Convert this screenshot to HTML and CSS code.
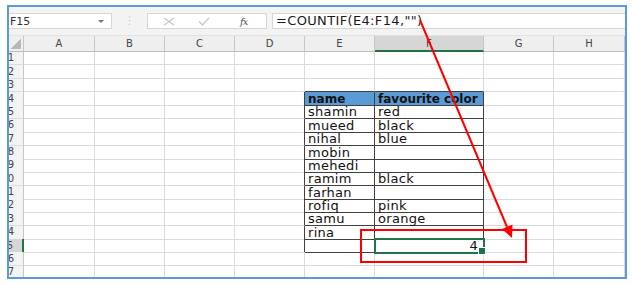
FILE: index.html
```html
<!DOCTYPE html>
<html lang="en">
<head>
    <meta charset="UTF-8">
    <title>COUNTIF blank cells</title>
    <link rel="stylesheet" href="styles.css">
</head>
<body>
    <div class="frame">
        <!-- formula bar -->
        <div class="toolbar">
            <div class="namebox"><span>F15</span><span class="drop"></span></div>
            <div class="grip">&#8942;</div>
            <div class="btns">
                <svg class="ico x" width="12" height="9" viewBox="0 0 12 9"><path d="M1 1L11 8M11 1L1 8" stroke="#c4c4c4" stroke-width="1.2" fill="none"/></svg>
                <svg class="ico ok" width="12" height="9" viewBox="0 0 12 9"><path d="M1 4.5L4.5 8L11 1" stroke="#c4c4c4" stroke-width="1.2" fill="none"/></svg>
                <span class="fx">fx</span>
            </div>
            <div class="formula">=COUNTIF(E4:F14,"")</div>
        </div>

        <!-- grid -->
        <div class="sheet">
            <div class="row head">
                <div class="corner"><span></span></div>
                <div class="ch">A</div><div class="ch">B</div><div class="ch">C</div><div class="ch">D</div>
                <div class="ch">E</div><div class="ch sel">F</div><div class="ch">G</div><div class="ch">H</div>
            </div>
            <div class="row">
                <div class="rh">1</div>
                <div class="c"></div><div class="c"></div><div class="c"></div><div class="c"></div>
                <div class="c"></div><div class="c"></div><div class="c"></div><div class="c"></div>
            </div>
            <div class="row">
                <div class="rh">2</div>
                <div class="c"></div><div class="c"></div><div class="c"></div><div class="c"></div>
                <div class="c"></div><div class="c"></div><div class="c"></div><div class="c"></div>
            </div>
            <div class="row">
                <div class="rh">3</div>
                <div class="c"></div><div class="c"></div><div class="c"></div><div class="c"></div>
                <div class="c tt"></div><div class="c tt"></div><div class="c"></div><div class="c"></div>
            </div>
            <div class="row">
                <div class="rh">4</div>
                <div class="c"></div><div class="c"></div><div class="c"></div><div class="c tl"></div>
                <div class="c t hd">name</div><div class="c t hd">favourite color</div><div class="c"></div><div class="c"></div>
            </div>
            <div class="row">
                <div class="rh">5</div>
                <div class="c"></div><div class="c"></div><div class="c"></div><div class="c tl"></div>
                <div class="c t">shamin</div><div class="c t">red</div><div class="c"></div><div class="c"></div>
            </div>
            <div class="row">
                <div class="rh">6</div>
                <div class="c"></div><div class="c"></div><div class="c"></div><div class="c tl"></div>
                <div class="c t">mueed</div><div class="c t">black</div><div class="c"></div><div class="c"></div>
            </div>
            <div class="row">
                <div class="rh">7</div>
                <div class="c"></div><div class="c"></div><div class="c"></div><div class="c tl"></div>
                <div class="c t">nihal</div><div class="c t">blue</div><div class="c"></div><div class="c"></div>
            </div>
            <div class="row">
                <div class="rh">8</div>
                <div class="c"></div><div class="c"></div><div class="c"></div><div class="c tl"></div>
                <div class="c t">mobin</div><div class="c t"></div><div class="c"></div><div class="c"></div>
            </div>
            <div class="row">
                <div class="rh">9</div>
                <div class="c"></div><div class="c"></div><div class="c"></div><div class="c tl"></div>
                <div class="c t">mehedi</div><div class="c t"></div><div class="c"></div><div class="c"></div>
            </div>
            <div class="row">
                <div class="rh">10</div>
                <div class="c"></div><div class="c"></div><div class="c"></div><div class="c tl"></div>
                <div class="c t">ramim</div><div class="c t">black</div><div class="c"></div><div class="c"></div>
            </div>
            <div class="row">
                <div class="rh">11</div>
                <div class="c"></div><div class="c"></div><div class="c"></div><div class="c tl"></div>
                <div class="c t">farhan</div><div class="c t"></div><div class="c"></div><div class="c"></div>
            </div>
            <div class="row">
                <div class="rh">12</div>
                <div class="c"></div><div class="c"></div><div class="c"></div><div class="c tl"></div>
                <div class="c t">rofiq</div><div class="c t">pink</div><div class="c"></div><div class="c"></div>
            </div>
            <div class="row">
                <div class="rh">13</div>
                <div class="c"></div><div class="c"></div><div class="c"></div><div class="c tl"></div>
                <div class="c t">samu</div><div class="c t">orange</div><div class="c"></div><div class="c"></div>
            </div>
            <div class="row">
                <div class="rh">14</div>
                <div class="c"></div><div class="c"></div><div class="c"></div><div class="c tl"></div>
                <div class="c t">rina</div><div class="c t"></div><div class="c"></div><div class="c"></div>
            </div>
            <div class="row">
                <div class="rh sel">15</div>
                <div class="c"></div><div class="c"></div><div class="c"></div><div class="c tl"></div>
                <div class="c t"></div><div class="c t num active">4</div><div class="c"></div><div class="c"></div>
            </div>
            <div class="row">
                <div class="rh">16</div>
                <div class="c"></div><div class="c"></div><div class="c"></div><div class="c"></div>
                <div class="c"></div><div class="c"></div><div class="c"></div><div class="c"></div>
            </div>
            <div class="row">
                <div class="rh">17</div>
                <div class="c"></div><div class="c"></div><div class="c"></div><div class="c"></div>
                <div class="c"></div><div class="c"></div><div class="c"></div><div class="c"></div>
            </div>
        </div>
    </div>

    <!-- red callout drawn over the sheet -->
    <svg class="marks" width="633" height="284" viewBox="0 0 633 284">
        <line x1="420" y1="20" x2="507" y2="227" stroke="#ff0000" stroke-width="2"/>
        <polygon points="512,238 512.5,224.5 502,229" fill="#ff0000"/>
        <rect x="361" y="230" width="165" height="32" fill="none" stroke="#ff0000" stroke-width="2"/>
    </svg>
</body>
</html>
```

FILE: styles.css
```css
/* sheet screenshot */
* { margin: 0; padding: 0; box-sizing: border-box; }
body { width: 633px; height: 284px; background: #fff; font-family: "DejaVu Sans", sans-serif; position: relative; overflow: hidden; }
.frame { margin: 5px 0 0 7px; width: 620px; height: 274px; border: 2px solid #5b9bd5; overflow: hidden; background: #fff; }

/* formula bar */
.toolbar { height: 29px; background: #f3f3f3; display: flex; align-items: flex-start; padding-top: 6px; border-bottom: 1px solid #e2e2e2; }
.namebox { width: 103px; height: 16px; background: #fff; border: 1px solid #d6d6d6; border-left: none; display: flex; align-items: center; justify-content: space-between; padding: 0 7px 0 1px; font-size: 11px; color: #333; }
.drop { width: 0; height: 0; border-left: 3px solid transparent; border-right: 3px solid transparent; border-top: 3px solid #777; }
.grip { width: 35px; text-align: center; font-size: 11px; line-height: 16px; color: #c8c8c8; }
.btns { width: 120px; height: 16px; background: #fff; border: 1px solid #d6d6d6; display: flex; align-items: center; padding-left: 15px; }
.ico.ok { margin-left: 23px; }
.fx { margin-left: 30px; font-family: "DejaVu Serif", serif; font-style: italic; font-size: 10px; color: #555; letter-spacing: -1px; }
.formula { flex: 1; height: 16px; margin-left: 5px; background: #fff; border: 1px solid #d6d6d6; border-right: none; padding-left: 3px; font-size: 13px; line-height: 14px; color: #1a1a1a; letter-spacing: 0.35px; }

/* grid */
.row { display: grid; grid-template-columns: 15px 71px 70px 70px 70px 70px 109px 70px 71px; height: 13.36px; }
.row.head { height: 16px; }
.corner { background: #efefef; border-right: 1px solid #c6c6c6; border-bottom: 1px solid #bdbdbd; display: flex; align-items: flex-end; justify-content: flex-end; padding: 0 2px 2px 0; }
.corner span { width: 10px; height: 10px; background: linear-gradient(to bottom right, transparent 50%, #b8b8b8 50%); }
.ch { background: #efefef; border-right: 1px solid #c6c6c6; border-bottom: 1px solid #bdbdbd; display: flex; align-items: center; justify-content: center; font-size: 10px; color: #444; }
.ch.sel { background: #d6d6d6; border-bottom: 2px solid #217346; }
.rh { background: #f3f3f3; border-right: 1px solid #c6c6c6; border-bottom: 1px solid #dcdcdc; display: flex; align-items: center; justify-content: flex-end; padding-right: 9px; overflow: hidden; font-size: 10px; line-height: 12px; color: #444; }
.rh.sel { background: #d6d6d6; border-right: 2px solid #217346; }
.c { border-right: 1px solid #dadada; border-bottom: 1px solid #dadada; display: flex; align-items: center; padding: 1px 0 0 3px; white-space: nowrap; font-size: 13px; line-height: 12px; color: #111; letter-spacing: 0.3px; }

/* bordered table E4:F15 */
.t { border-right-color: #404040; border-bottom-color: #404040; }
.tl { border-right-color: #404040; }
.tt { border-bottom-color: #404040; }
.hd { background: #5b9bd5; font-weight: bold; font-size: 12px; color: #111; letter-spacing: 0; }
.num { justify-content: flex-end; padding-right: 5px; }
.active { outline: 2px solid #217346; outline-offset: -1px; position: relative; }
.active::after { content: ""; position: absolute; right: -3px; bottom: -3px; width: 6px; height: 6px; background: #217346; border: 1px solid #fff; }

.marks { position: absolute; left: 0; top: 0; pointer-events: none; }
```
